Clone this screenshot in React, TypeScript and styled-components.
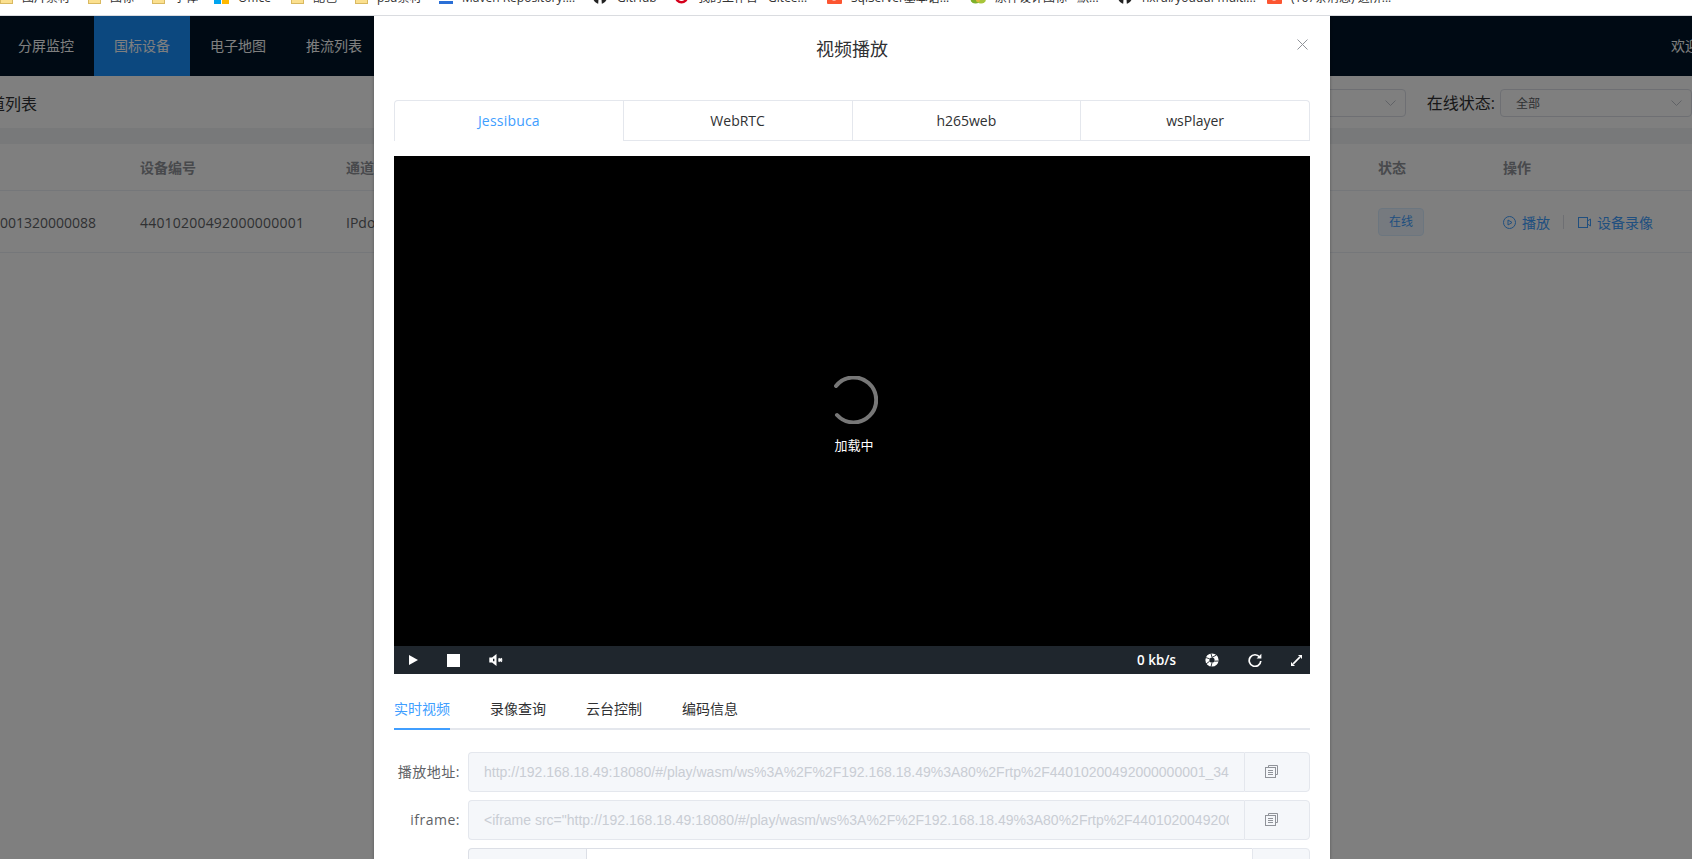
import * as React from 'react';
import styled, { createGlobalStyle } from 'styled-components';

const FONT = `"Open Sans", "Noto Sans CJK SC", sans-serif`;

const GlobalStyle = createGlobalStyle`
  html, body {
    margin: 0;
    padding: 0;
    width: 1692px;
    height: 859px;
    overflow: hidden;
    background: #fff;
    font-family: ${FONT};
  }
  * { box-sizing: border-box; }
`;

const Root = styled.div`
  position: relative;
  width: 1692px;
  height: 859px;
  overflow: hidden;
`;

// bookmarks: browser bar, cut off at the top of the capture
const BookmarkBar = styled.div`
  display: flex;
  height: 16px;
  overflow: hidden;
  background: #fff;
  border-bottom: 1px solid #dadce0;
`;

const Bookmark = styled.div<{ $width: number }>`
  display: flex;
  flex: none;
  align-items: center;
  gap: 9px;
  width: ${p => p.$width}px;
  height: 14px;
  margin-top: -10px;
  font-size: 12px;
  color: #333;
  white-space: nowrap;
`;

const NavBar = styled.div`
  display: flex;
  height: 60px;
  margin-left: -2px;
  background: #001529;
`;

const NavItem = styled.div<{ $active?: boolean }>`
  width: 96px;
  line-height: 60px;
  text-align: center;
  font-size: 14px;
  color: #fff;
  background: ${p => (p.$active ? '#1890ff' : 'transparent')};
`;

const NavSpacer = styled.div`
  flex: 1;
`;

const Welcome = styled.div`
  flex: none;
  width: 21px;
  overflow: hidden;
  line-height: 60px;
  font-size: 14px;
  color: #fff;
  white-space: nowrap;
`;

const Toolbar = styled.div`
  display: flex;
  align-items: center;
  height: 52px;
  padding-top: 2px;
`;

const PageTitle = styled.div`
  flex: none;
  margin: 0 0 1px -27px;
  font-size: 16px;
  color: #303133;
`;

const FilterLabel = styled.div`
  flex: none;
  margin: 0 5px 2px 21px;
  font-size: 16px;
  color: #303133;
`;

const Select = styled.div<{ $width: number }>`
  display: flex;
  flex: none;
  align-items: center;
  justify-content: space-between;
  width: ${p => p.$width}px;
  height: 28px;
  padding: 0 9px 0 15px;
  font-size: 12px;
  color: #606266;
  background: #fff;
  border: 1px solid #dcdfe6;
  border-radius: 4px;
`;

const Band = styled.div`
  height: 16px;
  background: #f0f2f5;
`;

const TableRow = styled.div<{ $head?: boolean }>`
  display: grid;
  grid-template-columns: 140px 206px 1032px 125px 1fr;
  align-items: center;
  height: ${p => (p.$head ? 47 : 62)}px;
  padding-top: ${p => (p.$head ? 0 : 1)}px;
  font-size: 14px;
  font-weight: ${p => (p.$head ? 700 : 400)};
  color: ${p => (p.$head ? '#909399' : '#606266')};
  border-bottom: 1px solid #ebeef5;
  white-space: nowrap;
`;

const NumberCell = styled.span`
  letter-spacing: 0.2px;
`;

const StatusTag = styled.div`
  width: 46px;
  height: 28px;
  line-height: 26px;
  text-align: center;
  font-size: 12px;
  color: #409eff;
  background: #ecf5ff;
  border: 1px solid #d9ecff;
  border-radius: 4px;
`;

const Actions = styled.div`
  display: flex;
  align-items: center;
  color: #409eff;
  font-weight: 400;
`;

const ActionIcon = styled.svg`
  flex: none;
  margin-right: 6px;
`;

const ActionDivider = styled.div`
  width: 1px;
  height: 14px;
  margin: 0 14px 0 13px;
  background: #dcdfe6;
`;

// dialog
const Overlay = styled.div`
  position: absolute;
  left: 0;
  right: 0;
  top: 16px;
  bottom: 0;
  overflow: hidden;
  padding-left: 374px;
  background: rgba(0, 0, 0, 0.5);
`;

const Dialog = styled.div`
  width: 956px;
  height: 843px;
  overflow: hidden;
  background: #fff;
  box-shadow: 0 1px 3px rgba(0, 0, 0, 0.3);
`;

const DialogHeader = styled.div`
  position: relative;
  height: 60px;
  padding-top: 21px;
  text-align: center;
  font-size: 18px;
  line-height: 24px;
  color: #303133;
`;

const CloseIcon = styled.svg`
  position: absolute;
  top: 23px;
  right: 22px;
`;

const DialogBody = styled.div`
  padding: 24px 20px 0;
`;

const CardTabs = styled.div`
  display: flex;
  height: 41px;
  border: 1px solid #e4e7ed;
  border-bottom: none;
  border-radius: 4px 4px 0 0;
`;

const CardTab = styled.div<{ $active?: boolean; $first?: boolean }>`
  flex: 1;
  line-height: 39px;
  text-align: center;
  font-size: 14px;
  letter-spacing: ${p => (p.$active ? 0.2 : 0)}px;
  color: ${p => (p.$active ? '#409eff' : '#303133')};
  border-left: ${p => (p.$first ? 'none' : '1px solid #e4e7ed')};
  border-bottom: 1px solid ${p => (p.$active ? '#fff' : '#e4e7ed')};
`;

const Player = styled.div`
  margin-top: 15px;
  background: #000;
`;

const VideoArea = styled.div`
  display: flex;
  flex-direction: column;
  align-items: center;
  height: 490px;
  padding: 220px 0 0 4px;
  color: #fff;
`;

const LoadingText = styled.div`
  margin-top: 11px;
  font-size: 13px;
  line-height: 20px;
  color: #fff;
`;

const Controls = styled.div`
  display: flex;
  align-items: center;
  height: 28px;
  padding: 0 7px 0 15px;
  background: #1f262d;
`;

const ControlIcon = styled.svg<{ $gap?: number }>`
  flex: none;
  display: block;
  margin-right: ${p => p.$gap ?? 0}px;
`;

const Speed = styled.div`
  margin: 0 29px 0 auto;
  font-size: 13.4px;
  font-weight: 600;
  color: #fff;
`;

const LineTabs = styled.div`
  display: flex;
  gap: 40px;
  height: 41px;
  margin-top: 15px;
  border-bottom: 2px solid #e4e7ed;
`;

const LineTab = styled.div<{ $active?: boolean }>`
  height: 41px;
  line-height: 40px;
  font-size: 14px;
  color: ${p => (p.$active ? '#409eff' : '#303133')};
  border-bottom: 2px solid ${p => (p.$active ? '#409eff' : 'transparent')};
`;

const Form = styled.div`
  display: flex;
  flex-direction: column;
  gap: 8px;
  margin-top: 22px;
`;

const FormRow = styled.div`
  display: flex;
  align-items: center;
  height: 40px;
`;

const FormLabel = styled.div`
  flex: none;
  width: 74px;
  padding: 0 8px 2px 0;
  text-align: right;
  font-size: 14px;
  letter-spacing: 0.5px;
  white-space: nowrap;
  color: #606266;
`;

const Group = styled.div`
  display: flex;
  flex: 1;
  height: 40px;
  min-width: 0;
`;

const UrlInput = styled.input<{ $disabled?: boolean }>`
  flex: 1;
  min-width: 0;
  height: 40px;
  padding: 0 15px;
  font: 14px "Liberation Sans", Arial, sans-serif;
  color: #c9cdd4;
  background: ${p => (p.$disabled ? '#f5f7fa' : '#fff')};
  border: 1px solid #e4e7ed;
  border-right: none;
  border-radius: 4px 0 0 4px;
  outline: none;
`;

const Append = styled.div<{ $width: number }>`
  display: flex;
  flex: none;
  align-items: center;
  justify-content: center;
  width: ${p => p.$width}px;
  height: 40px;
  padding: 0 11px 2px 0;
  background: #f5f7fa;
  border: 1px solid #e4e7ed;
  border-radius: 0 4px 4px 0;
`;

const Prepend = styled.div`
  flex: none;
  width: 118px;
  height: 40px;
  background: #f5f7fa;
  border: 1px solid #dcdfe6;
  border-right: none;
  border-radius: 4px 0 0 4px;
`;

const PlainInput = styled.div`
  flex: 1;
  height: 40px;
  background: #fff;
  border: 1px solid #dcdfe6;
  border-right: none;
`;

const Folder = () => (
  <svg width="13" height="14" viewBox="0 0 13 14">
    <rect x="0.5" y="2.5" width="12" height="11" fill="#fbe08f" stroke="#d9b961" />
  </svg>
);

const logos: Record<string, React.ReactNode> = {
  office: (
    <svg width="15" height="14" viewBox="0 0 15 14">
      <rect x="0" y="0" width="7" height="6.5" fill="#f25022" />
      <rect x="8" y="0" width="7" height="6.5" fill="#7fba00" />
      <rect x="0" y="7.5" width="7" height="6.5" fill="#00a4ef" />
      <rect x="8" y="7.5" width="7" height="6.5" fill="#ffb900" />
    </svg>
  ),
  maven: (
    <svg width="14" height="14" viewBox="0 0 14 14">
      <rect x="0" y="11" width="14" height="3" fill="#2a6fd6" />
      <rect x="0" y="0" width="14" height="7" fill="#ffffff" />
    </svg>
  ),
  github: (
    <svg width="16" height="14" viewBox="0 0 16 14">
      <circle cx="8" cy="7" r="7" fill="#222" />
      <path d="M6.6 8 L9.4 8 L9.8 14 L6.2 14 Z" fill="#fff" />
    </svg>
  ),
  gitee: (
    <svg width="15" height="14" viewBox="0 0 15 14">
      <circle cx="7.5" cy="6.5" r="5.7" fill="#fff" stroke="#d5001c" strokeWidth="2.4" />
    </svg>
  ),
  csdn: (
    <svg width="15" height="14" viewBox="0 0 15 14">
      <rect width="15" height="14" rx="1" fill="#fc5531" />
      <path d="M10.5 7.5 A3.6 3.6 0 0 1 4.5 8.5" fill="none" stroke="#fff" strokeWidth="1.6" />
    </svg>
  ),
  leaf: (
    <svg width="16" height="14" viewBox="0 0 16 14">
      <ellipse cx="5.5" cy="9" rx="5" ry="4.5" fill="#7fb02a" />
      <ellipse cx="11" cy="9" rx="5" ry="4.5" fill="#a8c53a" />
      <circle cx="8" cy="10" r="2" fill="#e2b83c" />
    </svg>
  ),
};

const bookmarks: { icon?: string; label: string; width: number }[] = [
  { label: '图片素材', width: 88 },
  { label: '图标', width: 64 },
  { label: '字体', width: 62 },
  { icon: 'office', label: 'Office', width: 77 },
  { label: '配色', width: 64 },
  { label: 'psd素材', width: 84 },
  { icon: 'maven', label: 'Maven Repository:...', width: 153 },
  { icon: 'github', label: 'GitHub', width: 82 },
  { icon: 'gitee', label: '我的工作台 - Gitee...', width: 153 },
  { icon: 'csdn', label: 'SqlServer基本语...', width: 143 },
  { icon: 'leaf', label: '原件设计图标 - 默...', width: 147 },
  { icon: 'github', label: 'nxrui/youdui-multi...', width: 150 },
  { icon: 'csdn', label: '(167条消息) 进阶...', width: 130 },
];

const Chevron = () => (
  <svg width="11" height="6" viewBox="0 0 11 6">
    <path d="M0.5 0.5 L5.5 5.5 L10.5 0.5" fill="none" stroke="#c0c4cc" />
  </svg>
);

const CopyIcon = () => (
  <svg width="13" height="13" viewBox="0 0 13 13" fill="none" stroke="#909399" strokeWidth="1">
    <path d="M3.5 2.5 V0.5 H12.5 V9.5 H10.5" />
    <rect x="0.5" y="2.5" width="10" height="10" />
    <path d="M3 5.5 H8 M3 7.5 H8 M3 9.5 H8" />
  </svg>
);

export default function App() {
  const url = 'http://192.168.18.49:18080/#/play/wasm/ws%3A%2F%2F192.168.18.49%3A80%2Frtp%2F44010200492000000001_34020000001320000088.live.flv';
  return (
    <Root>
      <GlobalStyle />
      <BookmarkBar>
        {bookmarks.map(b => (
          <Bookmark key={b.label + b.width} $width={b.width}>
            {b.icon ? logos[b.icon] : <Folder />}
            <span>{b.label}</span>
          </Bookmark>
        ))}
      </BookmarkBar>

      <NavBar>
        <NavItem>分屏监控</NavItem>
        <NavItem $active>国标设备</NavItem>
        <NavItem>电子地图</NavItem>
        <NavItem>推流列表</NavItem>
        <NavSpacer />
        <Welcome>欢迎</Welcome>
      </NavBar>

      <Toolbar>
        <PageTitle>通道列表</PageTitle>
        <NavSpacer />
        <Select $width={200}>
          <span />
          <Chevron />
        </Select>
        <FilterLabel>在线状态:</FilterLabel>
        <Select $width={192}>
          全部
          <Chevron />
        </Select>
      </Toolbar>
      <Band />

      <TableRow $head>
        <span />
        <span>设备编号</span>
        <span>通道</span>
        <span>状态</span>
        <span>操作</span>
      </TableRow>
      <TableRow>
        <span>001320000088</span>
        <NumberCell>44010200492000000001</NumberCell>
        <span>IPdome</span>
        <StatusTag>在线</StatusTag>
        <Actions>
          <ActionIcon width="13" height="13" viewBox="0 0 13 13" fill="none" stroke="#409eff">
            <circle cx="6.5" cy="6.5" r="6" />
            <path d="M5 4 L9 6.5 L5 9 Z" />
          </ActionIcon>
          播放
          <ActionDivider />
          <ActionIcon width="13" height="11" viewBox="0 0 13 11" fill="none" stroke="#409eff">
            <rect x="0.5" y="0.5" width="9" height="10" />
            <path d="M9.5 4 L12.5 2 V9 L9.5 7" />
          </ActionIcon>
          设备录像
        </Actions>
      </TableRow>

      <Overlay>
        <Dialog>
          <DialogHeader>
            视频播放
            <CloseIcon width="11" height="11" viewBox="0 0 11 11">
              <path d="M0.5 0.5 L10.5 10.5 M10.5 0.5 L0.5 10.5" stroke="#909399" />
            </CloseIcon>
          </DialogHeader>
          <DialogBody>
            <CardTabs>
              <CardTab $active $first>Jessibuca</CardTab>
              <CardTab>WebRTC</CardTab>
              <CardTab>h265web</CardTab>
              <CardTab>wsPlayer</CardTab>
            </CardTabs>

            <Player>
              <VideoArea>
                <svg width="48" height="48" viewBox="-24 -24 48 48">
                  <path d="M-18 -14 A22.5 22.5 0 1 1 -17 15" fill="none" stroke="#777" strokeWidth="4" strokeLinecap="round" />
                </svg>
                <LoadingText>加载中</LoadingText>
              </VideoArea>
              <Controls>
                <ControlIcon $gap={29} width="9" height="10" viewBox="0 0 9 10">
                  <path d="M0 0 L9 5 L0 10 Z" fill="#fff" />
                </ControlIcon>
                <ControlIcon $gap={29} width="13" height="13" viewBox="0 0 13 13">
                  <rect width="13" height="13" fill="#fff" />
                </ControlIcon>
                <ControlIcon width="14" height="12" viewBox="0 0 14 12">
                  <path d="M1 4.2 H3.2 L6.8 1.4 V10.6 L3.2 7.8 H1 Z" fill="#fff" stroke="#fff" strokeWidth="1.4" />
                  <path d="M4 4.8 H5.4 V7.2 H4 Z" fill="#1f262d" />
                  <path d="M9.5 4.5 L13 7.5 M13 4.5 L9.5 7.5" stroke="#fff" strokeWidth="1.7" />
                </ControlIcon>
                <Speed>0 kb/s</Speed>
                <ControlIcon $gap={29} width="14" height="14" viewBox="0 0 14 14">
                  <circle cx="7" cy="7" r="6.6" fill="#fff" />
                  <circle cx="7" cy="7" r="2.6" fill="#1f262d" />
                  <path d="M7 4.4 L11.5 2 M9.3 8.2 L13.5 8 M7 9.6 L6 13.8 M4.7 8.2 L1 11 M4.7 5.8 L0.7 4.5 M7 4.4 L6 0.5" stroke="#1f262d" strokeWidth="0.9" />
                </ControlIcon>
                <ControlIcon $gap={28} width="14" height="14" viewBox="0 0 14 14">
                  <path d="M11.6 4 A5.8 5.8 0 1 0 12.8 8" fill="none" stroke="#fff" strokeWidth="1.7" />
                  <path d="M13.4 0.8 V5.6 H8.6 Z" fill="#fff" />
                </ControlIcon>
                <ControlIcon width="13" height="13" viewBox="0 0 13 13">
                  <path d="M3.2 9.8 L9.8 3.2" stroke="#fff" strokeWidth="1.7" />
                  <path d="M8 1 H12 V5 Z M1 8 V12 H5 Z" fill="#fff" />
                </ControlIcon>
              </Controls>
            </Player>

            <LineTabs>
              <LineTab $active>实时视频</LineTab>
              <LineTab>录像查询</LineTab>
              <LineTab>云台控制</LineTab>
              <LineTab>编码信息</LineTab>
            </LineTabs>

            <Form>
              <FormRow>
                <FormLabel>播放地址:</FormLabel>
                <Group>
                  <UrlInput $disabled readOnly value={url} />
                  <Append $width={66}><CopyIcon /></Append>
                </Group>
              </FormRow>
              <FormRow>
                <FormLabel>iframe:</FormLabel>
                <Group>
                  <UrlInput $disabled readOnly value={`<iframe src="${url}"></iframe>`} />
                  <Append $width={66}><CopyIcon /></Append>
                </Group>
              </FormRow>
              <FormRow>
                <FormLabel />
                <Group>
                  <Prepend />
                  <PlainInput />
                  <Append $width={58} />
                </Group>
              </FormRow>
            </Form>
          </DialogBody>
        </Dialog>
      </Overlay>
    </Root>
  );
}
